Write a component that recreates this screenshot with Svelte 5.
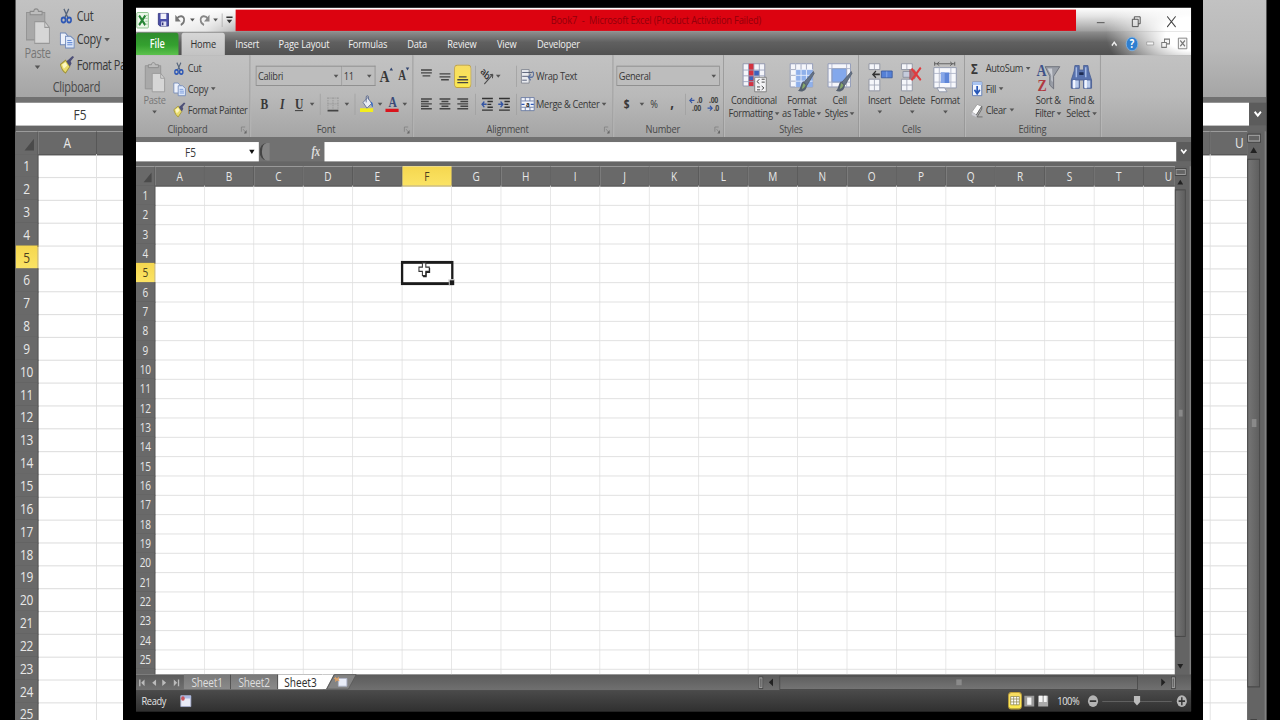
<script lang="ts">
	type View = { name: string; x: number; y: number; sx: number; sy: number };

	// the same 1366x728 window, once as a backdrop and once in front
	const back: View = { name: 'back', x: 15.5, y: -56, sx: 0.9158, sy: 1.142 };
	const front: View = { name: 'front', x: 136, y: 7.7, sx: 0.7724, sy: 0.9665 };

	const tabs = ['Insert', 'Page Layout', 'Formulas', 'Data', 'Review', 'View', 'Developer'];
	const columns = 'ABCDEFGHIJKLMNOPQRSTU'.split('');
	const rows = Array.from({ length: 26 }, (_, i) => i + 1);

	// only the outer columns of the backdrop stay visible
	function columnLabel(view: View, column: string) {
		return view.name === 'front' || column === 'A' || column === 'U' ? column : '';
	}

	function rowLabel(view: View, row: number) {
		return row < 26 ? row : '';
	}
</script>

{#snippet arrow()}
	<svg class="arrow" width="6" height="4" viewBox="0 0 6 4"><path d="M0 .3h6L3 3.400z" fill="#555" /></svg>
{/snippet}

{#snippet groupName(text: string, launcher: boolean)}
	<div class="group-name">
		<span>{text}</span>
		{#if launcher}
			<svg class="launcher" width="8" height="8" viewBox="0 0 9 9" fill="none" stroke="#808080">
				<path d="M0.5 6V0.5H6M3 3l4 4" /><path d="M8 4v4H4z" fill="#666" stroke="none" />
			</svg>
		{/if}
	</div>
{/snippet}

{#snippet lines(kind: string)}
	<svg width="18" height="16" viewBox="0 0 18 16" stroke="#444" stroke-width="1.4">
		{#if kind === 'top'}
			<path d="M2 1.5h14M2 4.5h14M4 7.5h10" />
		{:else if kind === 'middle'}
			<path d="M2 5.5h14M2 8.5h14M4 11.5h10" />
		{:else if kind === 'bottom'}
			<path d="M4 8.5h10M2 11.5h14M2 14.5h14" />
		{:else if kind === 'left'}
			<path d="M2 2.5h14M2 5h10M2 7.5h14M2 10h10M2 12.5h14" />
		{:else if kind === 'center'}
			<path d="M2 2.5h14M4.5 5h9M2 7.5h14M4.5 10h9M2 12.5h14" />
		{:else}
			<path d="M2 2.5h14M6 5h10M2 7.5h14M6 10h10M2 12.5h14" />
		{/if}
	</svg>
{/snippet}

{#snippet sheetIcon(kind: string)}
	<svg width="32" height="32" viewBox="0 0 32 32">
		{#if kind === 'conditional'}
			<path d="M2 2h28v23H2z" fill="#f4f5fa" stroke="#8b90a8" />
			<path d="M9 2h7v23H9z" fill="#d3323f" /><path d="M16 9h7v6h-7z" fill="#3d62bd" /><path d="M10 15h5v4h-5z" fill="#3d62bd" />
			<path d="M2 8.5h28M2 14.5h28M2 20.5h28M9 2v23M16 2v23M23 2v23" stroke="#99a0bc" />
			<path d="M17 16h15v15H17z" fill="#f3f3f5" stroke="#777" />
			<path d="M23 18l-3 2.5 3 2M26 18h4M26 21h4M20 26h4M20 29h4M26 25l3 2-3 2" fill="none" stroke="#333" />
		{:else if kind === 'table'}
			<path d="M1 2h29v24H1z" fill="#f5f6fb" stroke="#8b95b5" />
			<path d="M8 8h22v18H8z" fill="#8fb0ea" />
			<path d="M1 8h29M1 14h29M1 20h29M8 2v24M15 2v24M22 2v24" stroke="#e9effb" />
			<path d="M1 8h7M1 14h7M1 20h7M8 2v6M15 2v6M22 2v6" stroke="#a0a6bb" />
		{:else}
			<path d="M1 2h29v24H1z" fill="#f5f6fb" stroke="#8b95b5" />
			<path d="M6 7h19v14H6z" fill="#83a8ec" stroke="#6080bd" />
			<path d="M1 7h29M1 21h29M6 2v24M25 2v24" stroke="#a8afc6" />
		{/if}
		{#if kind !== 'conditional'}
			<path d="M31 10l1 2-9 12-4-3z" fill="#657386" stroke="#475062" stroke-width=".7" />
			<path d="M18 20l5 4c-1 6-6 8-12 6 4-2 3-8 7-10z" fill="#55606f" />
			<path d="M18 22l3 2c-1 2-3 4-5 4z" fill="#87a86a" />
		{/if}
	</svg>
{/snippet}

{#snippet cellIcon(kind: string)}
	<svg width="32" height="32" viewBox="0 0 32 32">
		{#if kind === 'format'}
			<path d="M2 2h26M2 0v4M28 0v4M8 0l-3 2 3 2M22 0l3 2-3 2" fill="none" stroke="#555" />
			<path d="M1 6h29v21H1z" fill="#f7f8fc" stroke="#8c93a8" />
			<path d="M1 12h29M1 21h29M8 6v21M23 6v21" stroke="#aeb4c8" />
			<path d="M10 11h11v11H10z" fill="#5f86d8" /><path d="M10 11h5v11h-5z" fill="#86a6e8" />
			<path d="M5 27h10l3 4H8z" fill="#f7f8fc" stroke="#8c93a8" />
		{:else}
			<path d="M2 2h14v6H2zM2 18h14v12H2z" fill="#f5f6fa" stroke="#8a8f9e" />
			<path d="M9 2v6M9 18v12M2 24h14" stroke="#a3a9b8" />
			{#if kind === 'insert'}
				<path d="M18 9.5h14v7H18z" fill="#5580d6" stroke="#3b5a9e" />
				<path d="M25 10v6" stroke="#8eadea" />
				<path d="M7 13h9M11 9.5L7 13l4 3.5" fill="none" stroke="#333" stroke-width="1.6" />
			{:else}
				<path d="M4 10h10v6H4z" fill="#c5cbdc" stroke="#8a8f9e" />
				<path d="M12 8h7l4 5-4 5h-7z" fill="#a3434e" opacity=".65" />
				<path d="M15 7l12 12M27 6L15 19" stroke="#e03b3e" stroke-width="2.4" />
			{/if}
		{/if}
	</svg>
{/snippet}

{#snippet titleBar()}
	<header class="title-bar">
		<div class="quick">
			<svg width="17" height="18" viewBox="0 0 17 18">
				<rect x="1" y="1" width="15" height="16" rx="1" fill="#edf6ea" stroke="#7fbb80" />
				<path d="M4 4l8 10M12 4L4 14" stroke="#278536" stroke-width="2.6" />
				<path d="M12 4h3M12 7h3M12 10h3M12 13h3" stroke="#8dc58f" />
			</svg>
			<svg width="15" height="15" viewBox="0 0 16 16">
				<path d="M1 1h14v14H3l-2-2z" fill="#4a4fa8" stroke="#30347c" />
				<path d="M4 1h8v6H4z" fill="#f3f3fb" /><path d="M5 10h7v5H5z" fill="#dedff0" /><path d="M6 11h2v3H6z" fill="#30347c" />
			</svg>
			<svg width="15" height="14" viewBox="0 0 17 15" fill="none" stroke="#777" stroke-width="2.4">
				<path d="M3 6c4-5 11-4 11 1 0 3-2 5-5 6" /><path d="M1 1v8h8z" fill="#777" stroke="none" />
			</svg>
			{@render arrow()}
			<svg width="15" height="14" viewBox="0 0 17 15" fill="none" stroke="#888" stroke-width="2.4">
				<path d="M14 6C10 1 3 2 3 7c0 3 2 5 5 6" /><path d="M16 1v8H8z" fill="#888" stroke="none" />
			</svg>
			{@render arrow()}
			<i class="quick-sep"></i>
			<svg width="8" height="8" viewBox="0 0 9 9"><path d="M0 1h9" stroke="#333" stroke-width="1.5" /><path d="M0.5 4h8l-4 4z" fill="#333" /></svg>
		</div>
		<div class="caption">
			<span>Book7</span><span>-</span><span>Microsoft Excel (Product Activation Failed)</span>
		</div>
		<div class="window-buttons">
			<svg width="12" height="12" viewBox="0 0 12 12" stroke="#444"><path d="M1 6.5h10" /></svg>
			<svg width="12" height="11" viewBox="0 0 14 13" fill="none" stroke="#444" stroke-width="1.2">
				<path d="M1 3.5h9v9H1zM4 3.5v-3h9v8.5h-3" />
			</svg>
			<svg width="13" height="11" viewBox="0 0 14 12" stroke="#444" stroke-width="1.3"><path d="M1 0l12 12M13 0L1 12" /></svg>
		</div>
	</header>

	<nav class="tabs">
		<span class="tab file">File</span>
		<span class="tab home">Home</span>
		{#each tabs as tab}
			<span class="tab">{tab}</span>
		{/each}
		<div class="doc-buttons">
			<svg width="9" height="7" viewBox="0 0 10 8" fill="none" stroke="#eee" stroke-width="2"><path d="M1.5 6L5 2l3.5 4" /></svg>
			<svg width="17" height="15" viewBox="0 0 18 16">
				<ellipse cx="9" cy="8" rx="8" ry="7.5" fill="#2f7fd0" stroke="#7fb4e8" />
				<text x="9" y="12.5" text-anchor="middle" font-size="13" font-weight="700" fill="#fff">?</text>
			</svg>
			<svg width="10" height="8" viewBox="0 0 10 8"><path d="M.5 2.500h9v3h-9z" fill="#f4f4f4" stroke="#888" stroke-width=".7" /></svg>
			<svg width="12" height="12" viewBox="0 0 12 12" fill="#f4f4f4" stroke="#777" stroke-width="1.2"><path d="M4.500 1.500H11v5H4.500z" /><path d="M1 5h6v5H1z" /></svg>
			<svg width="12" height="12" viewBox="0 0 12 12" fill="#f6f6f6" stroke="#777"><path d="M.5.5h11v11H.5z" /><path d="M3 3l6 6M9 3L3 9" stroke-width="1.5" /></svg>
		</div>
	</nav>
{/snippet}

{#snippet clipboardGroup()}
	<div class="group">
		<div class="group-body">
			<div class="big paste">
				<svg width="28" height="32" viewBox="0 0 28 32">
					<path d="M2 4h20v24H2z" fill="#a9a9a9" stroke="#939393" />
					<path d="M6 6V3h4c0-3 5-3 5 0h4v3z" fill="#bdbdbd" stroke="#8b8b8b" />
					<path d="M11 12h11l5 5v14H11z" fill="#d6d6d6" stroke="#989898" /><path d="M22 12v5h5" fill="none" stroke="#989898" />
				</svg>
				<span>Paste</span>
				{@render arrow()}
			</div>
			<div class="small-list">
				<div class="small">
					<svg width="15" height="14" viewBox="0 0 16 16" fill="none">
						<path d="M5 1l5 9M11 1L6 10" stroke="#56657c" stroke-width="1.6" />
						<circle cx="4.5" cy="12" r="2.5" stroke="#2d57b5" stroke-width="2" /><circle cx="11.5" cy="12" r="2.5" stroke="#2d57b5" stroke-width="2" />
					</svg>
					<span>Cut</span>
				</div>
				<div class="small">
					<svg width="17" height="15" viewBox="0 0 18 16" stroke="#6f88b8">
						<path d="M1 1h6l3 3v8H1z" fill="#eef2fb" /><path d="M7 4h6l4 3v8H7z" fill="#dce7fa" /><path d="M9 8h5M9 10h6M9 12h6" stroke="#6a8fd6" />
					</svg>
					<span>Copy</span>{@render arrow()}
				</div>
				<div class="small">
					<svg width="17" height="15" viewBox="0 0 18 16">
						<path d="M1 8l6-4 5 6-5 6c-2-1-5-4-6-8z" fill="#e9dc6d" stroke="#a09238" />
						<path d="M3 8l4-2 2 3-4 3z" fill="#fbf7c4" /><path d="M8 5l4 5 2-3-1-2 4-4-2-1-4 3z" fill="#4d4f77" />
					</svg>
					<span>Format Painter</span>
				</div>
			</div>
		</div>
		{@render groupName('Clipboard', true)}
	</div>
{/snippet}

{#snippet otherGroups()}
	<div class="group">
		<div class="group-body two-rows">
			<div class="row font-row">
				<div class="combo family"><span>Calibri</span>{@render arrow()}</div>
				<div class="combo size"><span>11</span>{@render arrow()}</div>
				<b class="serif grow">A<svg width="5" height="3" viewBox="0 0 6 4"><path d="M0 4h6L3 0z" fill="#34466f" /></svg></b>
				<b class="serif shrink">A<svg width="5" height="3" viewBox="0 0 6 4"><path d="M0 0h6L3 4z" fill="#34466f" /></svg></b>
			</div>
			<div class="row style-row">
				<b class="serif">B</b>
				<em class="serif">I</em>
				<u class="serif">U</u>
				{@render arrow()}
				<i class="sep"></i>
				<svg width="16" height="16" viewBox="0 0 16 16">
					<path d="M1.5 1v12M8 1v12M14.5 1v12M1 1.5h14M1 7.5h14" stroke="#959595" stroke-dasharray="1.5 1" /><path d="M1 14.5h14" stroke="#444" stroke-width="1.6" />
				</svg>
				{@render arrow()}
				<i class="sep"></i>
				<svg width="18" height="18" viewBox="0 0 18 18">
					<path d="M0 13h17v4H0z" fill="#f3ee1c" /><path d="M4 7l6-5 5 6-6 5z" fill="#e8ecf4" stroke="#5d6d91" />
					<path d="M8 7V1.5c0-2 3-2 3 0V4" fill="none" stroke="#5d6d91" /><path d="M14 6c3 1 3 3 2.5 6-2-1-2-3-2.5-6z" fill="#3668c2" />
				</svg>
				{@render arrow()}
				<svg width="18" height="18" viewBox="0 0 18 18">
					<text class="serif" x="9" y="12" text-anchor="middle" font-size="15" font-weight="700" fill="#3a4a78">A</text>
					<path d="M0 13.5h17V17H0z" fill="#d9141c" />
				</svg>
				{@render arrow()}
			</div>
		</div>
		{@render groupName('Font', true)}
	</div>

	<div class="group">
		<div class="group-body two-rows">
			<div class="row align-row">
				{@render lines('top')}
				{@render lines('middle')}
				<span class="active">{@render lines('bottom')}</span>
				<i class="sep"></i>
				<svg width="18" height="18" viewBox="0 0 18 18">
					<text x="0" y="9" font-size="11" font-weight="600" fill="#333" transform="rotate(42 5 6)">ab</text>
					<path d="M5 17L16 7M16 7l-4 .5M16 7l-.5 4" fill="none" stroke="#4c4c4c" stroke-width="1.3" />
				</svg>
				<span class="lead">{@render arrow()}</span>
				<i class="sep"></i>
				<svg width="18" height="16" viewBox="0 0 18 16">
					<path d="M1 1h10v14H1z" fill="#e9ebf0" stroke="#80858f" /><path d="M2 4h13M2 8h9M2 12h6" stroke="#47506a" />
					<path d="M15 3c3 1 2 6-1 6h-3M13 6l-3 3 3 3" fill="none" stroke="#5e73a0" stroke-width="1.4" />
				</svg>
				<span class="text">Wrap Text</span>
			</div>
			<div class="row align-row">
				{@render lines('left')}
				{@render lines('center')}
				{@render lines('right')}
				<i class="sep"></i>
				<svg width="18" height="16" viewBox="0 0 18 16"><path d="M2 2h14M9 5h7M9 8h5M9 11h7M2 14h14" stroke="#333" stroke-width="1.5" /><path d="M8 8H2M5 5L2 8l3 3" fill="none" stroke="#3455a4" stroke-width="1.6" /></svg>
				<svg width="18" height="16" viewBox="0 0 18 16"><path d="M2 2h14M9 5h7M9 8h5M9 11h7M2 14h14" stroke="#333" stroke-width="1.5" /><path d="M1 8h6M4 5l3 3-3 3" fill="none" stroke="#3455a4" stroke-width="1.6" /></svg>
				<i class="sep"></i>
				<svg width="18" height="16" viewBox="0 0 18 16">
					<path d="M.5 1h17v13.500H.5z" fill="#f1f4fb" stroke="#65779f" /><path d="M1 4.500h16M1 11h16M6 1v3.500M12 1v3.500M6 11v3.500M12 11v3.500" stroke="#65779f" />
					<path d="M1 8h4M17 8h-4" stroke="#2e58b5" stroke-width="1.5" />
					<text x="9" y="10.8" text-anchor="middle" font-size="8" font-weight="700" fill="#222">a</text>
				</svg>
				<span class="text">Merge &amp; Center {@render arrow()}</span>
			</div>
		</div>
		{@render groupName('Alignment', true)}
	</div>

	<div class="group">
		<div class="group-body two-rows">
			<div class="row"><div class="combo general"><span>General</span>{@render arrow()}</div></div>
			<div class="row number-row">
				<b class="dollar">$</b>
				{@render arrow()}
				<span>%</span>
				<b class="comma">,</b>
				<i class="sep"></i>
				<svg width="18" height="16" viewBox="0 0 18 16" font-size="9" font-weight="700" fill="#444">
					<text x="10" y="7">.0</text><text x="4" y="15">.00</text><path d="M1 4h6M4 1.5L1 4l3 2.5" fill="none" stroke="#3556a5" stroke-width="1.3" />
				</svg>
				<svg width="18" height="16" viewBox="0 0 18 16" font-size="9" font-weight="700" fill="#444">
					<text x="3" y="7">.00</text><text x="9" y="15">.0</text><path d="M1 12h6M4 9.5L7 12l-3 2.5" fill="none" stroke="#3556a5" stroke-width="1.3" />
				</svg>
			</div>
		</div>
		{@render groupName('Number', true)}
	</div>

	<div class="group">
		<div class="group-body styles">
			<div class="big">{@render sheetIcon('conditional')}<span>Conditional</span><span>Formatting {@render arrow()}</span></div>
			<div class="big">{@render sheetIcon('table')}<span>Format</span><span>as Table {@render arrow()}</span></div>
			<div class="big">{@render sheetIcon('styles')}<span>Cell</span><span>Styles {@render arrow()}</span></div>
		</div>
		{@render groupName('Styles', false)}
	</div>

	<div class="group">
		<div class="group-body cells-group">
			<div class="big">{@render cellIcon('insert')}<span>Insert</span>{@render arrow()}</div>
			<div class="big">{@render cellIcon('delete')}<span>Delete</span>{@render arrow()}</div>
			<div class="big">{@render cellIcon('format')}<span>Format</span>{@render arrow()}</div>
		</div>
		{@render groupName('Cells', false)}
	</div>

	<div class="group">
		<div class="group-body editing">
			<div class="small-list">
				<div class="small"><b class="sigma">Σ</b><span>AutoSum</span>{@render arrow()}</div>
				<div class="small">
					<svg width="16" height="16" viewBox="0 0 16 16"><path d="M2 1h12v14H2z" fill="#f0f5fe" stroke="#5674b0" /><path d="M2 1h12v3H2z" fill="#a9c4f1" /><path d="M8 5v7M4.5 9L8 13l3.5-4" fill="none" stroke="#2757b8" stroke-width="2.2" /></svg>
					<span>Fill</span>{@render arrow()}
				</div>
				<div class="small">
					<svg width="16" height="16" viewBox="0 0 16 16"><path d="M1 10l7-8 6 2-7 9z" fill="#fdfdfd" stroke="#999" /><path d="M1 10l6 3v2l-6-2z" fill="#cfcfd6" /><path d="M7 13l7-9v3l-6 8h7" fill="none" stroke="#666" /></svg>
					<span>Clear</span>{@render arrow()}
				</div>
			</div>
			<div class="big">
				<svg width="32" height="32" viewBox="0 0 32 32">
					<path d="M12 5h19l-8 10v13l-5-4v-9z" fill="#999da6" stroke="#696d77" /><path d="M15 7h6l1 14-2-2v-5z" fill="#c9ccd3" />
					<text class="serif" x="7" y="15" text-anchor="middle" font-size="18" font-weight="700" fill="#3f5288">A</text>
					<text class="serif" x="8" y="30" text-anchor="middle" font-size="18" font-weight="700" fill="#b03a40">Z</text>
				</svg>
				<span>Sort &amp;</span><span>Filter {@render arrow()}</span>
			</div>
			<div class="big">
				<svg width="30" height="32" viewBox="0 0 32 32" stroke="#4a5f92">
					<path d="M7 3h6v5h6V3h6l1 6 4 10v9H19v-9h-6v9H2v-9L6 9z" fill="#5872ae" />
					<path d="M3 19h10v9H3zM19 19h10v9H19z" fill="#b8caeb" /><path d="M6 19v9M22 19v9" stroke="#f2f6ff" stroke-width="3" />
					<path d="M9 5v11M22 5v11" stroke="#a7bce6" stroke-width="2" /><path d="M13 12h6" stroke="#1d2c52" stroke-width="3" />
				</svg>
				<span>Find &amp;</span><span>Select {@render arrow()}</span>
			</div>
		</div>
		{@render groupName('Editing', false)}
	</div>
{/snippet}

{#snippet bottomBars()}
	<div class="sheet-tabs">
		<div class="nav">
			<svg width="8" height="7" viewBox="0 0 9 8" fill="#bbb"><path d="M0 0h2v8H0zM8 0v8L3 4z" /></svg>
			<svg width="5" height="7" viewBox="0 0 6 8" fill="#bbb"><path d="M6 0v8L0 4z" /></svg>
			<svg width="5" height="7" viewBox="0 0 6 8" fill="#bbb"><path d="M0 0v8l6-4z" /></svg>
			<svg width="8" height="7" viewBox="0 0 9 8" fill="#bbb"><path d="M7 0h2v8H7zM1 0v8l5-4z" /></svg>
		</div>
		<span class="sheet-tab">Sheet1</span>
		<span class="sheet-tab">Sheet2</span>
		<span class="sheet-tab open">Sheet3</span>
		<svg class="new-tab" width="46" height="16" viewBox="0 0 46 16">
			<path d="M0 0h15L5 15H0z" fill="#fff" /><path d="M16 0h28L34 15H6z" fill="#838383" stroke="#555" stroke-width=".8" />
			<path d="M21 4h11v8H21z" fill="#e9edf8" stroke="#b0b8cc" /><path d="M17 2l2 2 3-2-1 3 2 2-4-1-2 2v-3l-2-1 2-1z" fill="#e0a163" />
		</svg>
		<div class="h-scroll">
			<i class="handle"></i>
			<svg width="6" height="8" viewBox="0 0 6 9"><path d="M6 0v9L0 4.500z" fill="#222" /></svg>
			<div class="h-thumb"><i></i></div>
			<svg width="6" height="8" viewBox="0 0 6 9"><path d="M0 0v9l6-4.500z" fill="#222" /></svg>
			<i class="handle"></i>
		</div>
	</div>

	<footer class="status">
		<span class="ready">Ready</span>
		<svg width="15" height="13" viewBox="0 0 16 14"><path d="M1 1h14v12H1z" fill="#e8eaf6" stroke="#a7b0d2" /><path d="M1 1h14v3H1z" fill="#a9b8e2" /><circle cx="4" cy="4" r="2.5" fill="#c8545b" /></svg>
		<div class="zoom">
			<span class="view active"><svg width="12" height="10" viewBox="0 0 14 11"><path d="M.5.5h13v10H.5zM.5 3.500h13M.5 7h13M5 .5v10M9.500 .5v10" fill="#fff" stroke="#8b8350" /></svg></span>
			<span class="view"><svg width="13" height="11" viewBox="0 0 14 12"><path d="M0 0h14v12H0z" fill="#999" /><path d="M4 2h6v8H4z" fill="#f4f4f4" /></svg></span>
			<span class="view"><svg width="13" height="11" viewBox="0 0 14 12"><path d="M0 0h14v12H0z" fill="#aaa" /><path d="M1 0h5v7H1zM8 0h4v7H8z" fill="#f4f4f4" /></svg></span>
			<span class="percent">100%</span>
			<svg width="14" height="13" viewBox="0 0 15 14"><ellipse cx="7.5" cy="7" rx="7" ry="6.5" fill="#b4b4b4" /><path d="M3 7h9" stroke="#333" stroke-width="2" /></svg>
			<div class="slider"><svg width="8" height="10" viewBox="0 0 9 11"><path d="M0 0h9v7l-4.500 4L0 7z" fill="#bcbcbc" /></svg></div>
			<svg width="14" height="13" viewBox="0 0 15 14"><ellipse cx="7.5" cy="7" rx="7" ry="6.5" fill="#b4b4b4" /><path d="M3 7h9M7.5 2.500v9" stroke="#333" stroke-width="2" /></svg>
		</div>
	</footer>
{/snippet}

{#snippet excelWindow(view: View)}
	<div
		class="window {view.name}"
		style="transform: translate({view.x}px, {view.y}px) scale({view.sx}, {view.sy})"
	>
		{#if view.name === 'front'}
			{@render titleBar()}
		{:else}
			<div class="spacer"></div>
		{/if}

		<section class="ribbon">
			{@render clipboardGroup()}
			{#if view.name === 'front'}
				{@render otherGroups()}
			{/if}
		</section>

		<div class="formula-bar">
			<div class="name-box"><span>F5</span><svg width="8" height="5" viewBox="0 0 8 5"><path d="M0.500 0h7L4 4.500z" fill="#111" /></svg></div>
			<div class="fx"><i class="knob"></i>{#if view.name === 'front'}<em>fx</em>{/if}</div>
			<div class="formula"></div>
			<div class="expand"><svg width="9" height="6" viewBox="0 0 10 7"><path d="M1 1l4 4 4-4" fill="none" stroke="#fff" stroke-width="2.4" /></svg></div>
		</div>

		<div class="sheet-area">
			<div class="sheet">
				<div class="line head">
					<div class="corner"><svg width="12" height="12" viewBox="0 0 14 13"><path d="M13 0v12H1z" fill="#4a4a4a" /></svg></div>
					{#each columns as column}
						<div class="column-name" class:selected={column === 'F'}>{columnLabel(view, column)}</div>
					{/each}
				</div>
				{#each rows as row}
					<div class="line">
						<div class="row-name" class:selected={row === 5}>{rowLabel(view, row)}</div>
						{#each columns as column}
							<div class="cell" class:current={row === 5 && column === 'F'}>
								{#if row === 5 && column === 'F'}
									<svg class="pointer" width="16" height="16" viewBox="0 0 17 18">
										<path d="M6 1h5v5h5v5h-5v5H6v-5H1V6h5z" fill="#fff" stroke="#333" stroke-width="1.5" />
										<path d="M16.500 7v5h-5v5H7" fill="none" stroke="#222" stroke-width="1.6" />
									</svg>
								{/if}
							</div>
						{/each}
					</div>
				{/each}
			</div>
			<div class="v-scroll">
				<i class="split"></i>
				<svg width="8" height="5" viewBox="0 0 9 6"><path d="M0 6h9L4.500 0z" fill="#222" /></svg>
				<div class="v-thumb"><i></i></div>
				<svg width="8" height="5" viewBox="0 0 9 6"><path d="M0 0h9L4.500 6z" fill="#222" /></svg>
			</div>
		</div>

		{#if view.name === 'front'}
			{@render bottomBars()}
		{/if}
	</div>
{/snippet}

<main>
	{@render excelWindow(back)}
	<div class="shade"></div>
	{@render excelWindow(front)}
</main>

<style>
	:global(body) {
		background: #000;
	}

	main {
		position: relative;
		width: 1280px;
		height: 720px;
		overflow: hidden;
		background: #000;
	}

	.shade {
		position: absolute;
		left: 123px;
		top: 0;
		width: 1080px;
		height: 720px;
		background: #000;
	}

	.window {
		position: absolute;
		left: 0;
		top: 0;
		display: flex;
		flex-direction: column;
		width: 1366px;
		height: 728px;
		overflow: hidden;
		transform-origin: 0 0;
		background: #6a6a6a;
		color: #383838;
		font-family: 'Open Sans', 'Noto Sans', sans-serif;
		font-size: 12px;
		letter-spacing: -0.45px;
		line-height: 14px;
		white-space: nowrap;
	}

	svg {
		display: block;
		flex: none;
		overflow: visible;
	}

	.arrow {
		display: inline-block;
		vertical-align: middle;
	}

	.serif {
		font-family: 'Liberation Serif', serif;
	}

	.spacer {
		flex: none;
		height: 49px;
	}

	.title-bar {
		display: flex;
		flex: none;
		height: 25px;
		background:
			radial-gradient(ellipse 110px 40px at 1366px 22px, #fff 30%, #fff0),
			linear-gradient(#fff, #e4e4e4 35%, #9b9b9b);
	}

	.quick {
		display: grid;
		grid-template-columns: 25px 21px 22px 9px 22px 8px 9px 9px;
		justify-items: center;
		align-items: center;
		width: 129px;
		background: linear-gradient(90deg, #fff, #fffb 70%, #fff4);
	}

	.quick > :first-child {
		justify-self: start;
	}

	.quick-sep {
		width: 1px;
		height: 14px;
		background: #aaa;
	}

	.caption {
		display: flex;
		justify-content: center;
		gap: 6px;
		width: 1088px;
		height: 22px;
		margin-top: 2px;
		background: #dc0310;
		color: #92000b;
		line-height: 21px;
		letter-spacing: -0.25px;
	}

	.window-buttons {
		display: flex;
		align-items: center;
		justify-content: space-between;
		width: 104px;
		margin-left: 26px;
		padding-top: 4px;
	}

	.tabs {
		display: flex;
		flex: none;
		align-items: flex-end;
		height: 24px;
		background:
			radial-gradient(ellipse 110px 50px at 1366px 4px, #fff 30%, #fff0),
			linear-gradient(#8d8d8d, #606060 45%, #515151);
		color: #f0f0f0;
		letter-spacing: -0.2px;
	}

	.tab {
		width: 58px;
		height: 23px;
		line-height: 23px;
		text-align: center;
	}

	.tab.file {
		width: 55px;
		border-radius: 3px 3px 0 0;
		background: linear-gradient(#2f8d2d, #34a02f 55%, #5cc14d);
		color: #fff;
		font-weight: 600;
	}

	.tab.home {
		width: 56px;
		margin-left: 4px;
		border-radius: 3px 3px 0 0;
		background: linear-gradient(#d6d6d6, #c3c3c3);
		color: #303030;
	}

	.tab:nth-child(4) {
		width: 89px;
	}

	.tab:nth-child(5) {
		width: 76px;
	}

	.tab:nth-child(6),
	.tab:nth-child(8) {
		width: 52px;
	}

	.tab:nth-child(7) {
		width: 64px;
	}

	.tab:nth-child(9) {
		width: 82px;
	}

	.doc-buttons {
		display: flex;
		align-items: center;
		justify-content: space-between;
		width: 99px;
		height: 24px;
		margin-left: auto;
		padding-right: 5px;
	}

	.ribbon {
		display: grid;
		grid-template-columns: 148px 211px 259px 143px 175px 137px 176px;
		flex: none;
		height: 85px;
		background: linear-gradient(#c2c2c2, #b9b9b9 50%, #a5a5a5);
	}

	.group {
		display: flex;
		flex-direction: column;
		border-right: 1px solid #949494;
		box-shadow: 1px 0 #c0c0c0;
	}

	.group-body {
		display: flex;
		height: 69px;
		padding: 3px 0 0 6px;
		box-sizing: border-box;
	}

	.group-name {
		display: flex;
		align-items: center;
		height: 16px;
		color: #484848;
		letter-spacing: -0.3px;
	}

	.group-name span {
		flex: 1;
		padding-right: 14px;
		text-align: center;
	}

	.group-name span:last-child {
		padding-right: 0;
	}

	.launcher {
		margin: 1px 3px 0 -11px;
	}

	.big {
		display: flex;
		flex-direction: column;
		align-items: center;
		padding-top: 4px;
	}

	.big > svg:first-child {
		margin-bottom: 1px;
	}

	.big > span {
		line-height: 13px;
	}

	.big > .arrow {
		margin-top: 4px;
	}

	.paste {
		width: 40px;
		margin-left: -2px;
		margin-right: -1px;
		color: #777;
	}

	.small-list {
		display: flex;
		flex-direction: column;
		padding-left: 5px;
	}

	.small {
		display: grid;
		grid-template-columns: 19px auto auto;
		align-items: center;
		justify-content: start;
		height: 21.5px;
	}

	.small .arrow {
		margin-left: 4px;
	}

	.two-rows {
		flex-direction: column;
		padding-top: 7px;
	}

	.row {
		display: grid;
		align-items: center;
		justify-items: center;
		height: 29px;
	}

	.combo {
		display: flex;
		align-items: center;
		justify-content: space-between;
		width: 100%;
		height: 21px;
		padding: 0 4px 0 2px;
		border: 1px solid #8f8f8f;
		box-sizing: border-box;
		background: #bdbdbd;
	}

	.font-row {
		grid-template-columns: 112px 43px 28px 18px;
		margin-left: 1px;
	}

	.combo.size {
		border-left: 0;
	}

	.row .grow,
	.row .shrink {
		display: flex;
		font-size: 18px;
		line-height: 18px;
	}

	.row .shrink {
		font-size: 14px;
	}

	.style-row {
		grid-template-columns: 24px 22px 22px 12px 9px 24px 12px 9px 22px 12px 20px 12px;
	}

	.style-row > .serif {
		font-size: 15px;
		font-weight: 700;
	}

	.style-row > em {
		font-weight: 400;
	}

	.sep {
		width: 1px;
		height: 22px;
		background: #a0a0a0;
	}

	.align-row {
		grid-template-columns: 24px 23px 23px 10px 22px 22px 8px 22px auto;
		justify-content: start;
		margin-left: -1px;
	}

	.align-row .text,
	.align-row .lead {
		justify-self: start;
	}

	.active {
		display: grid;
		place-items: center;
		width: 20px;
		height: 22px;
		border-radius: 3px;
		background: linear-gradient(#f7dc62, #fbe94f);
		box-shadow: 0 0 0 1px #c5a339;
	}

	.general {
		width: 134px;
		margin-left: -6px;
	}

	.number-row {
		grid-template-columns: 24px 15px 17px 30px 4px 24px 22px;
		justify-content: start;
		margin-left: -1px;
	}

	.dollar {
		font-size: 13px;
	}

	.comma {
		font-size: 17px;
		line-height: 12px;
		padding-bottom: 4px;
	}

	.styles {
		display: grid;
		grid-template-columns: 70px 54px 44px;
		padding-left: 4px;
	}

	.cells-group {
		display: grid;
		grid-template-columns: 41px 44px 41px;
	}

	.editing {
		display: grid;
		grid-template-columns: 82px 46px 40px;
		padding-left: 3px;
	}

	.sigma {
		font-size: 15px;
	}

	.formula-bar {
		display: grid;
		grid-template-columns: 159px 85px 1103px 19px;
		flex: none;
		height: 20px;
		border-top: 5px solid #717171;
		border-bottom: 5px solid #666;
		background: #717171;
	}

	.name-box {
		display: flex;
		align-items: center;
		padding-right: 5px;
		background: #fff;
	}

	.name-box span {
		flex: 1;
		padding-right: 5px;
		text-align: center;
		letter-spacing: 0;
		font-size: 13px;
	}

	.fx {
		display: flex;
		align-items: center;
		justify-content: space-between;
		padding-right: 6px;
		color: #ddd;
		font: italic 700 14px 'Liberation Serif', serif;
	}

	.knob {
		width: 13px;
		height: 18px;
		margin-left: 1px;
		border-left: 3px solid #444;
		border-radius: 10px 0 0 10px;
		background: #858585;
		box-sizing: border-box;
	}

	.formula {
		background: #fff;
	}

	.expand {
		display: grid;
		place-items: center;
		background: #5c5c5c;
	}

	.sheet-area {
		display: flex;
		flex: none;
		height: 526px;
	}

	.sheet {
		width: 1345px;
		overflow: hidden;
		background: #fff;
	}

	.line {
		display: grid;
		grid-template-columns: 25px repeat(21, 64px);
		height: 20px;
	}

	.corner,
	.column-name,
	.row-name {
		border-right: 1px solid #565656;
		border-bottom: 1px solid #565656;
		box-sizing: border-box;
		background: #696969;
		color: #e8e8e8;
		line-height: 20px;
		text-align: center;
		font-size: 13px;
		font-weight: 500;
		letter-spacing: 0;
	}

	.corner {
		display: grid;
		place-items: end;
		padding: 0 3px 2px 0;
	}

	.row-name {
		letter-spacing: -0.3px;
	}

	.column-name.selected,
	.row-name.selected {
		background: linear-gradient(#f5d74f, #fbe364);
		border-color: #b29a3e;
		color: #4b4120;
	}

	.cell {
		border-right: 1px solid #e0e0e0;
		border-bottom: 1px solid #e0e0e0;
	}

	.cell.current {
		position: relative;
		z-index: 1;
		outline: 3px solid #1b1b1b;
		outline-offset: -1px;
		border-color: transparent;
	}

	.cell.current::after {
		content: '';
		position: absolute;
		right: -4px;
		bottom: -3px;
		width: 6px;
		height: 5px;
		border: solid #fff;
		border-width: 1px 0 0 1px;
		background: #1b1b1b;
	}

	.pointer {
		position: absolute;
		left: 20px;
		top: -1px;
		z-index: 1;
	}

	.v-scroll {
		display: flex;
		flex-direction: column;
		align-items: center;
		gap: 5px;
		width: 21px;
		padding: 3px 5px 4px 0;
		box-sizing: border-box;
		border-right: 2px solid #818181;
		background: #646464;
	}

	.split {
		width: 11px;
		height: 4px;
		flex: none;
		border: 1px solid #a2a2a2;
		box-shadow: 0 0 0 1px #444;
	}

	.v-thumb {
		display: grid;
		place-items: center;
		flex: none;
		width: 14px;
		height: 463px;
		box-sizing: border-box;
		border: 1px solid #484848;
		background: linear-gradient(90deg, #757575, #5f5f5f);
	}

	.v-thumb i {
		width: 5px;
		height: 7px;
		background: #8a8a8a;
	}

	.v-scroll svg:last-child {
		margin-top: auto;
		margin-bottom: 2px;
	}

	.sheet-tabs {
		display: flex;
		flex: none;
		height: 16px;
		background: linear-gradient(#5b5b5b, #707070);
	}

	.nav {
		display: flex;
		align-items: center;
		justify-content: space-between;
		width: 62px;
		padding: 0 6px 0 4px;
		box-sizing: border-box;
	}

	.sheet-tab {
		width: 61px;
		height: 15px;
		border-right: 1px solid #4c4c4c;
		box-sizing: border-box;
		background: linear-gradient(#797979, #8a8a8a);
		color: #dedede;
		font-size: 13px;
		line-height: 16px;
		letter-spacing: -0.2px;
		text-align: center;
	}

	.sheet-tab.open {
		width: 58px;
		border: 0;
		background: #fff;
		color: #333;
		font-family: 'Noto Sans', sans-serif;
		letter-spacing: 0;
	}

	.new-tab {
		margin-left: -1px;
	}

	.h-scroll {
		display: flex;
		align-items: center;
		justify-content: space-between;
		width: 538px;
		margin-left: auto;
		margin-right: 21px;
	}

	.handle {
		width: 4px;
		height: 11px;
		border: 1px solid #a2a2a2;
		box-sizing: border-box;
		box-shadow: 0 0 0 1px #444;
	}

	.h-thumb {
		display: grid;
		place-items: center;
		width: 464px;
		height: 15px;
		margin-right: 22px;
		border: 1px solid #484848;
		box-sizing: border-box;
		background: linear-gradient(#5f5f5f, #747474);
	}

	.h-thumb i {
		width: 7px;
		height: 6px;
		background: #8a8a8a;
	}

	.status {
		display: flex;
		flex: 1;
		align-items: center;
		padding: 0 5px 0 7px;
		background: linear-gradient(#4b4b4b, #303030);
		color: #e3e3e3;
	}

	.ready {
		width: 50px;
	}

	.zoom {
		display: grid;
		grid-template-columns: 18px 18px 18px 48px 15px 100px 15px;
		align-items: center;
		justify-items: center;
		margin-left: auto;
	}

	.view.active {
		width: 16px;
		height: 16px;
	}

	.slider {
		display: grid;
		place-items: center;
		width: 90px;
		height: 11px;
		background: linear-gradient(#0000 45%, #606060 45%, #606060 55%, #0000 55%);
	}
</style>
